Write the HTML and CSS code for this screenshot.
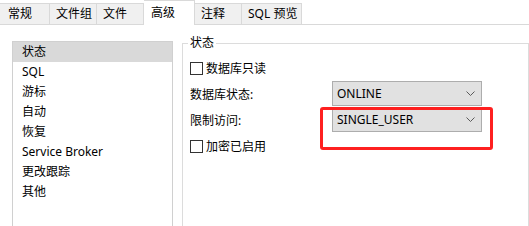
FILE: index.html
```html
<!DOCTYPE html>
<html lang="zh-CN">
<head>
    <meta charset="UTF-8">
    <title>高级</title>
    <link rel="stylesheet" href="styles.css">
</head>
<body>
    <div class="tabs">
        <div class="tab tab-first">常规</div>
        <div class="tab">文件组</div>
        <div class="tab">文件</div>
        <div class="tab active">高级</div>
        <div class="tab">注释</div>
        <div class="tab">SQL 预览</div>
    </div>

    <div class="page">
        <ul class="nav-list">
            <li class="selected">状态</li>
            <li>SQL</li>
            <li>游标</li>
            <li>自动</li>
            <li>恢复</li>
            <li>Service Broker</li>
            <li>更改跟踪</li>
            <li>其他</li>
        </ul>

        <fieldset class="group">
            <legend>状态</legend>
            <label class="check-row"><span class="check-box"></span>数据库只读</label>
            <div class="field-row">
                <span class="field-label">数据库状态:</span>
                <div class="combo">ONLINE
                    <svg class="chevron" width="9" height="5" viewBox="0 0 9 5"><path d="M0.5 0.5 L4.5 4.5 L8.5 0.5" fill="none" stroke="#5a5a5a" stroke-width="1"/></svg>
                </div>
            </div>
            <div class="field-row second">
                <span class="field-label">限制访问:</span>
                <div class="combo">SINGLE_USER
                    <svg class="chevron" width="9" height="5" viewBox="0 0 9 5"><path d="M0.5 0.5 L4.5 4.5 L8.5 0.5" fill="none" stroke="#5a5a5a" stroke-width="1"/></svg>
                </div>
            </div>
            <label class="check-row last"><span class="check-box"></span>加密已启用</label>
        </fieldset>

        <div class="mark"></div>
    </div>
</body>
</html>
```

FILE: styles.css
```css
* {
    box-sizing: border-box;
}
body {
    margin: 0;
    width: 529px;
    height: 226px;
    overflow: hidden;
    background: #fff;
    color: #000;
    font-family: "Noto Sans", "Noto Sans CJK SC", sans-serif;
    font-size: 12px;
}
.tabs {
    display: flex;
    align-items: flex-end;
    height: 25px;
    border-bottom: 1px solid #d9d9d9;
}
.tab {
    height: 21px;
    min-width: 47px;
    padding: 0 4px 0 6px;
    line-height: 20px;
    background: #f0f0f0;
    border-top: 1px solid #d9d9d9;
    border-right: 1px solid #d9d9d9;
    white-space: nowrap;
}
.tab-first {
    min-width: 50px;
    padding-left: 8px;
}
.tab.active {
    height: 25px;
    min-width: 51px;
    padding-left: 7px;
    margin-bottom: -1px;
    line-height: 23px;
    background: #fff;
}
.page {
    position: relative;
    display: flex;
    align-items: flex-start;
    height: 201px;
    padding-left: 12px;
    overflow: hidden;
}
.nav-list {
    list-style: none;
    margin: 16px 0 0 0;
    padding: 0;
    width: 161px;
    height: 200px;
    border: 1px solid #d0d0d0;
}
.nav-list li {
    height: 20px;
    line-height: 20px;
    padding-left: 9px;
}
.nav-list li.selected {
    background: #d9d9d9;
}
.group {
    margin: 10px 0 0 9px;
    padding: 0 0 0 7px;
    width: 347px;
    height: 200px;
    border: 1px solid #dcdcdc;
}
.group legend {
    margin-left: -2px;
    padding: 0 2px;
    line-height: 16px;
}
.check-row {
    display: flex;
    align-items: center;
    height: 20px;
    margin-top: 7px;
}
.check-row.last {
    margin-top: 4px;
}
.check-box {
    width: 13px;
    height: 13px;
    margin-right: 3px;
    border: 1px solid #333;
    background: #fff;
}
.field-row {
    display: flex;
    align-items: center;
    height: 25px;
    margin-top: 3px;
}
.field-row.second {
    margin-top: 1px;
}
.field-label {
    width: 142px;
}
.combo {
    display: flex;
    align-items: center;
    justify-content: space-between;
    width: 150px;
    height: 25px;
    padding: 0 6px 0 4px;
    background: #e1e1e1;
    border: 1px solid #adadad;
}
.mark {
    position: absolute;
    left: 320px;
    top: 82px;
    width: 173px;
    height: 43px;
    border: 3px solid #fe2020;
    border-radius: 3px;
}
```
